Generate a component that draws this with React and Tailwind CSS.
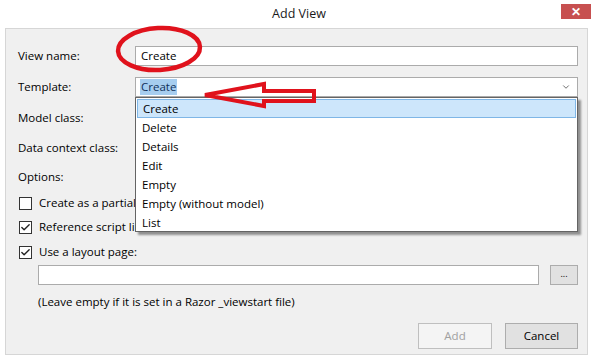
import { ChevronDown, Check } from 'lucide-react';

const templates = ['Create', 'Delete', 'Details', 'Edit', 'Empty', 'Empty (without model)', 'List'];

function Box({ checked }) {
  return (
    <div className="w-[13px] h-[13px] shrink-0 border border-[#333] bg-white flex items-center justify-center">
      {checked && <Check className="w-[11px] h-[11px] text-[#222]" strokeWidth={3} />}
    </div>
  );
}

function Row({ label, children, className = '' }) {
  return (
    <div className={`flex items-center h-[20px] ${className}`}>
      <div className="w-[117px] shrink-0">{label}</div>
      {children}
    </div>
  );
}

export default function App() {
  return (
    <div className="relative w-[594px] h-[361px] bg-white overflow-hidden text-[11.5px] text-black font-['Open_Sans',sans-serif]">
      {/* title bar */}
      <div className="h-[28px] flex items-center justify-center pl-[4px] text-[12.5px] text-[#1a1a1a]">Add View</div>
      <button className="absolute top-[4px] left-[561px] w-[30px] h-[15px] bg-[#c75050] flex items-center justify-center text-white text-[12px] font-bold leading-none">
        ✕
      </button>

      {/* body */}
      <div className="relative mx-[5px] w-[583px] h-[327px] border border-[#d6d6d6] bg-[#f0f0f0] pl-[12px] pr-[9px]">
        <Row label="View name:" className="mt-[17px]">
          <div className="flex-1 h-[20px] border border-[#ababab] bg-white flex items-center pl-[5px]">Create</div>
        </Row>
        <Row label="Template:" className="mt-[11px]">
          <div className="flex-1 h-[20px] border border-[#ababab] bg-white flex items-center pl-[4px] pr-[6px]">
            <span className="bg-[#a6cdef] text-[#10305a] px-px leading-[16px]">Create</span>
            <ChevronDown className="ml-auto w-[10px] h-[10px] text-[#555]" strokeWidth={2} />
          </div>
        </Row>
        <Row label="Model class:" className="mt-[11px]" />
        <Row label="Data context class:" className="mt-[10px]" />
        <div className="mt-[9px] h-[20px] flex items-center">Options:</div>
        {/* option labels are cut where the open dropdown covers them */}
        <div className="mt-[6px] h-[20px] flex items-center gap-[7px] pl-px">
          <Box />
          <span className="w-[96px] overflow-hidden whitespace-nowrap">Create as a partial view</span>
        </div>
        <div className="mt-[4px] h-[20px] flex items-center gap-[7px] pl-px">
          <Box checked />
          <span className="w-[96px] overflow-hidden whitespace-nowrap">Reference script libraries</span>
        </div>
        <div className="mt-[5px] h-[20px] flex items-center gap-[7px] pl-px">
          <Box checked />
          <span>Use a layout page:</span>
        </div>
        <div className="mt-[3px] ml-[20px] h-[20px] flex items-center gap-[11px]">
          <div className="w-[503px] h-[20px] border border-[#ababab] bg-white" />
          <div className="w-[28px] h-[20px] border border-[#acacac] bg-[#e1e1e1] flex items-center justify-center text-[9px] leading-none pb-[3px]">...</div>
        </div>
        <div className="mt-[7px] ml-[20px] h-[20px] flex items-center">(Leave empty if it is set in a Razor _viewstart file)</div>
        <div className="mt-[11px] flex justify-end gap-[13px]">
          <div className="w-[74px] h-[26px] border border-[#bfbfbf] bg-[#f4f4f4] text-[#a0a0a0] flex items-center justify-center">Add</div>
          <div className="w-[73px] h-[26px] border border-[#adadad] bg-[#e1e1e1] flex items-center justify-center">Cancel</div>
        </div>

        {/* open template dropdown */}
        <div className="absolute left-[129px] top-[68px] w-[443px] h-[135px] border border-[#646464] bg-white p-px shadow-[3px_3px_2px_rgba(0,0,0,0.4)]">
          {templates.map((t, i) => (
            <div
              key={t}
              className={`h-[19px] flex items-center pl-[5px] ${i === 0 ? 'bg-[#cde6fb] border border-[#7fb6e6] pl-[4px]' : ''}`}
            >
              {t}
            </div>
          ))}
        </div>
      </div>

      {/* red annotations */}
      <svg className="absolute inset-0 pointer-events-none" width="594" height="361">
        <ellipse cx="159" cy="49" rx="41" ry="21" fill="none" stroke="#e0121c" strokeWidth="4.5" transform="rotate(-3 159 49)" />
        <polygon
          points="205,95 264,84 264,91 314,91 314,101 264,101 264,106"
          fill="none"
          stroke="#e0121c"
          strokeWidth="4"
          strokeLinejoin="miter"
        />
      </svg>
    </div>
  );
}
